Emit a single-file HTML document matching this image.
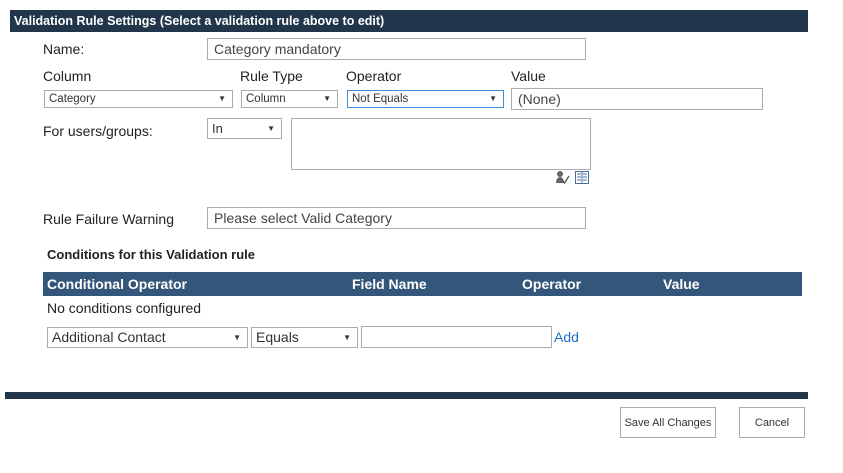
<!DOCTYPE html>
<html><head><style>
body{margin:0;width:843px;height:473px;background:#fff;font-family:"Liberation Sans",sans-serif;position:relative;overflow:hidden;color:#222}
.a{position:absolute;white-space:nowrap}
.l{font-size:14px;color:#222}
.box{position:absolute;border:1px solid #ababab;background:#fff;box-sizing:border-box}
.sel{position:absolute;border:1px solid #ababab;background:#fff;box-sizing:border-box;font-size:11.5px;padding-left:4px;line-height:16px;color:#333}
.sel:after{content:"▼";position:absolute;right:6px;top:0;font-size:8px;color:#333}
.txt{font-size:14px;color:#444;padding-left:6px;line-height:20px}
.th{color:#fff;font-weight:bold;font-size:14px;top:276px}
</style></head><body>
<div class="a" style="left:10px;top:10px;width:798px;height:22px;background:#22364b"></div>
<div class="a" style="left:14px;top:14px;color:#fff;font-weight:bold;font-size:12.5px">Validation Rule Settings (Select a validation rule above to edit)</div>

<div class="a l" style="left:43px;top:41px">Name:</div>
<div class="box txt" style="left:207px;top:38px;width:379px;height:22px">Category mandatory</div>

<div class="a l" style="left:43px;top:68px">Column</div>
<div class="a l" style="left:240px;top:68px">Rule Type</div>
<div class="a l" style="left:346px;top:68px">Operator</div>
<div class="a l" style="left:511px;top:68px">Value</div>

<div class="sel" style="left:44px;top:90px;width:189px;height:18px">Category</div>
<div class="sel" style="left:241px;top:90px;width:97px;height:18px">Column</div>
<div class="sel" style="left:347px;top:90px;width:157px;height:18px;border-color:#3c8be0">Not Equals</div>
<div class="box txt" style="left:511px;top:88px;width:252px;height:22px">(None)</div>

<div class="a l" style="left:43px;top:123px">For users/groups:</div>
<div class="sel" style="left:207px;top:118px;width:75px;height:21px;font-size:13px;line-height:19px">In</div>
<div class="box" style="left:291px;top:118px;width:300px;height:52px"></div>
<svg class="a" style="left:555px;top:170px" width="36" height="16" viewBox="0 0 36 16">
<circle cx="5" cy="4" r="3" fill="#666"/><path d="M1 13c0-4 2-6 4-6s4 2 4 6z" fill="#666"/>
<path d="M7 10l2.5 3L14 6" stroke="#555" stroke-width="1.3" fill="none"/>
<rect x="20.5" y="1.5" width="13" height="12" fill="none" stroke="#4a6ea0"/>
<path d="M27 1.5v12M22 4h4M22 7h4M22 10h4M28 4h4M28 7h4M28 10h4" stroke="#4a6ea0"/>
</svg>

<div class="a l" style="left:43px;top:211px">Rule Failure Warning</div>
<div class="box txt" style="left:207px;top:207px;width:379px;height:22px">Please select Valid Category</div>

<div class="a" style="left:47px;top:247px;font-size:13px;font-weight:bold;color:#222">Conditions for this Validation rule</div>

<div class="a" style="left:43px;top:272px;width:759px;height:24px;background:#34567a"></div>
<div class="a th" style="left:47px">Conditional Operator</div>
<div class="a th" style="left:352px">Field Name</div>
<div class="a th" style="left:522px">Operator</div>
<div class="a th" style="left:663px">Value</div>

<div class="a l" style="left:47px;top:300px">No conditions configured</div>

<div class="sel" style="left:47px;top:327px;width:201px;height:21px;font-size:14px;line-height:19px">Additional Contact</div>
<div class="sel" style="left:251px;top:327px;width:107px;height:21px;font-size:14px;line-height:19px">Equals</div>
<div class="box" style="left:361px;top:326px;width:191px;height:22px"></div>
<div class="a" style="left:554px;top:329px;font-size:14px;color:#1e6fc0">Add</div>

<div class="a" style="left:5px;top:392px;width:803px;height:7px;background:#22364b"></div>

<div class="box" style="left:620px;top:407px;width:96px;height:31px;font-size:11px;text-align:center;line-height:31px;color:#333">Save All Changes</div>
<div class="box" style="left:739px;top:407px;width:66px;height:31px;font-size:11px;text-align:center;line-height:31px;color:#333">Cancel</div>
</body></html>
